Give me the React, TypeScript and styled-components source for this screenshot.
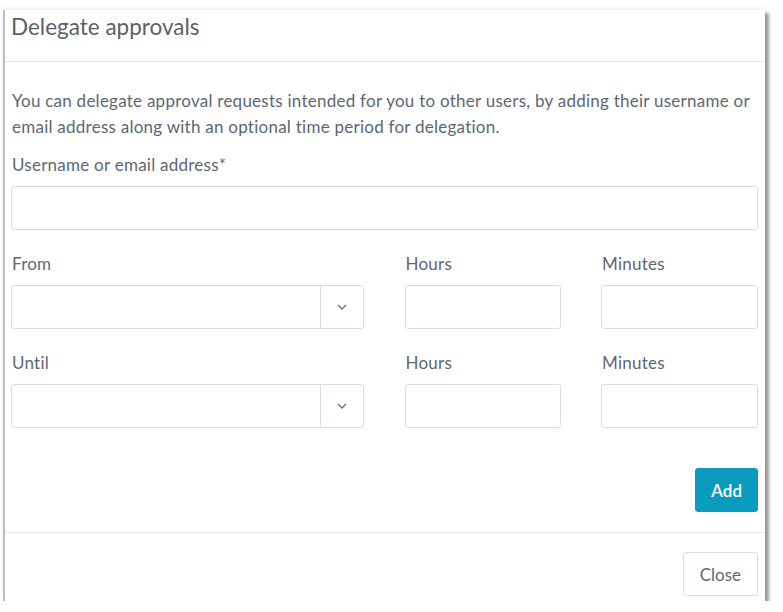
import * as React from "react";
import styled, { createGlobalStyle } from "styled-components";

const GlobalStyle = createGlobalStyle`
  html, body {
    margin: 0;
    padding: 0;
    background: #ffffff;
  }
  body {
    font-family: "Lato", "Liberation Sans", sans-serif;
    color: #5d6871;
  }
`;

const Page = styled.div`
  padding: 10px 0 0 3px;
`;

const Dialog = styled.div`
  width: 762px;
  height: 591px;
  box-sizing: border-box;
  background: #ffffff;
  border-left: 2px solid #bdbdbd;
  box-shadow: 4px 3px 3px rgba(0, 0, 0, 0.38), 0 -2px 5px rgba(0, 0, 0, 0.08);
  display: flex;
  flex-direction: column;
  overflow: hidden;
`;

const Header = styled.div`
  height: 52px;
  box-sizing: border-box;
  padding: 2px 0 0 6px;
  border-bottom: 1px solid #e6e6e6;
`;

const Title = styled.h4`
  margin: 0;
  font-size: 22.5px;
  font-weight: 400;
  line-height: 30px;
  color: #5b6166;
`;

const Body = styled.div`
  padding: 26px 7px 0 6px;
  display: flex;
  flex-direction: column;
`;

const Intro = styled.p`
  margin: 0 0 12px 1px;
  font-size: 17px;
  letter-spacing: 0.25px;
  line-height: 26px;
`;

const Label = styled.label`
  display: block;
  font-size: 17px;
  letter-spacing: 0.25px;
  line-height: 26px;
  margin: 0 0 8px 1px;
`;

const TextInput = styled.input`
  display: block;
  width: 100%;
  height: 44px;
  box-sizing: border-box;
  border: 1px solid #d7dfe4;
  border-radius: 3px;
  background: #ffffff;
  outline: none;
  padding: 0 10px;
  font: inherit;
`;

const Field = styled.div`
  margin-bottom: 21px;
`;

const TimeRow = styled.div`
  display: grid;
  grid-template-columns: 353px 156px 157px;
  column-gap: 40.5px;
  margin-bottom: 21px;
`;

const SelectBox = styled.div`
  display: flex;
  height: 44px;
  box-sizing: border-box;
  border: 1px solid #d7dfe4;
  border-radius: 3px;
`;

const SelectValue = styled.div`
  flex: 1;
`;

const SelectButton = styled.div`
  width: 42px;
  border-left: 1px solid #d7dfe4;
  display: flex;
  align-items: center;
  justify-content: center;
`;

const Actions = styled.div<{ $top: number; $bottom: number }>`
  display: flex;
  justify-content: flex-end;
  padding: ${(p) => p.$top}px 7px ${(p) => p.$bottom}px 0;
`;

const Button = styled.button<{ $primary?: boolean }>`
  height: 44px;
  box-sizing: border-box;
  padding: 0 ${(p) => (p.$primary ? 15 : 16)}px;
  font-family: "Lato", "Liberation Sans", sans-serif;
  font-size: 17px;
  border-radius: 3px;
  cursor: pointer;
  border: 1px solid ${(p) => (p.$primary ? "#0a9bbf" : "#dcdfe2")};
  background: ${(p) => (p.$primary ? "#0a9bbf" : "#ffffff")};
  color: ${(p) => (p.$primary ? "#ffffff" : "#5d6871")};
  font-weight: ${(p) => (p.$primary ? 600 : 400)};
`;

const Footer = styled.div`
  border-top: 1px solid #e6e6e6;
  padding: 19px 7px 0 0;
  display: flex;
  justify-content: flex-end;
`;

const Chevron = () => (
  <svg width="10" height="6" viewBox="0 0 10 6">
    <path d="M1 1l4 4 4-4" fill="none" stroke="#6b747b" strokeWidth="1.4" />
  </svg>
);

const TimeFields: React.FC<{ label: string }> = ({ label }) => (
  <TimeRow>
    <div>
      <Label>{label}</Label>
      <SelectBox>
        <SelectValue />
        <SelectButton>
          <Chevron />
        </SelectButton>
      </SelectBox>
    </div>
    <div>
      <Label>Hours</Label>
      <TextInput />
    </div>
    <div>
      <Label>Minutes</Label>
      <TextInput />
    </div>
  </TimeRow>
);

export default function App() {
  return (
    <>
      <GlobalStyle />
      <Page>
        <Dialog>
          <Header>
            <Title>Delegate approvals</Title>
          </Header>
          <Body>
            <Intro>
              You can delegate approval requests intended for you to other
              users, by adding their username or email address along with an
              optional time period for delegation.
            </Intro>
            <Field>
              <Label>Username or email address*</Label>
              <TextInput />
            </Field>
            <TimeFields label="From" />
            <TimeFields label="Until" />
          </Body>
          <Actions $top={19} $bottom={20}>
            <Button $primary>Add</Button>
          </Actions>
          <Footer>
            <Button>Close</Button>
          </Footer>
        </Dialog>
      </Page>
    </>
  );
}
